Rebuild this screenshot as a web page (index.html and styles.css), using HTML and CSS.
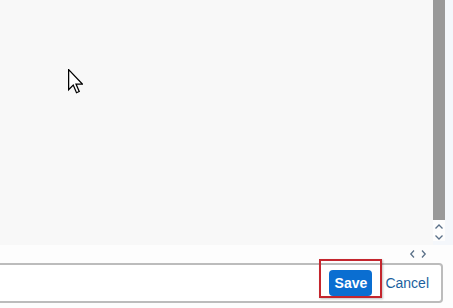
FILE: index.html
```html
<!DOCTYPE html>
<html lang="en">
<head>
  <meta charset="UTF-8" />
  <title>Editor</title>
  <link rel="stylesheet" href="styles.css">
</head>
<body>
  <div class="page">
    <!-- area de edicion con scroll vertical -->
    <div class="content">
      <div class="canvas">
        <svg class="pointer" width="15" height="25" viewBox="0 0 12 20">
          <path d="M0.5 0.5 L0.5 16.5 L4.2 12.8 L6.8 19 L9 18 L6.4 12 L11.5 12 Z" fill="#fff" stroke="#000" stroke-width="1"/>
        </svg>
      </div>
      <div class="vscroll">
        <div class="thumb"></div>
        <div class="arrows">
          <svg width="10" height="7" viewBox="0 0 10 7"><path d="M1.5 5.5 L5 2 L8.5 5.5" fill="none" stroke="#5a7088" stroke-width="1.3"/></svg>
          <svg width="10" height="7" viewBox="0 0 10 7"><path d="M1.5 1.5 L5 5 L8.5 1.5" fill="none" stroke="#5a7088" stroke-width="1.3"/></svg>
        </div>
      </div>
    </div>

    <!-- scroll horizontal -->
    <div class="hscroll">
      <svg width="7" height="10" viewBox="0 0 7 10"><path d="M5 1.5 L1.8 5 L5 8.5" fill="none" stroke="#5a7088" stroke-width="1.3"/></svg>
      <svg width="7" height="10" viewBox="0 0 7 10"><path d="M2 1.5 L5.2 5 L2 8.5" fill="none" stroke="#5a7088" stroke-width="1.3"/></svg>
    </div>

    <!-- barra de acciones -->
    <div class="footer">
      <div class="highlight">
        <button class="save">Save</button>
      </div>
      <button class="cancel">Cancel</button>
    </div>
  </div>
</body>
</html>
```

FILE: styles.css
```css
* {
  margin: 0;
  padding: 0;
  box-sizing: border-box;
}

body {
  background: #fdfdfd;
  font-family: "Liberation Sans", Arial, sans-serif;
}

.page {
  width: 453px;
  height: 308px;
  overflow: hidden;
}

/* zona gris superior */
.content {
  display: flex;
  height: 245px;
}

.canvas {
  flex: 1;
  background: #f8f8f8;
  position: relative;
}

.pointer {
  position: absolute;
  left: 68px;
  top: 69px;
}

.vscroll {
  width: 20px;
  display: flex;
  flex-direction: column;
  background: #f4f7fb;
}

.thumb {
  width: 12px;
  height: 220px;
  background: #999999;
}

.arrows {
  width: 12px;
  display: flex;
  flex-direction: column;
  align-items: center;
  gap: 4px;
  padding-top: 3px;
  background: #fdfdfd;
}

.hscroll {
  height: 17px;
  display: flex;
  justify-content: flex-end;
  align-items: center;
  gap: 4px;
  padding-right: 26px;
}

/* barra inferior con borde */
.footer {
  width: 443px;
  height: 40px;
  margin-top: 1px;
  border: 2px solid #bcbcbc;
  border-left: none;
  border-radius: 0 4px 4px 0;
  background: #fff;
  display: flex;
  justify-content: flex-end;
  align-items: center;
  padding-right: 12px;
}

.highlight {
  border: 2px solid #c4262e;
  padding: 9px 8px 0 8px;
  margin-top: -9px;
  margin-right: 3px;
  box-shadow: 1px 1px 2px rgba(0, 0, 0, 0.25);
}

.save {
  display: block;
  width: 43px;
  height: 26px;
  border: none;
  border-radius: 4px;
  background: #0a6ed1;
  color: #fff;
  font-family: "Liberation Sans", Arial, sans-serif;
  font-weight: bold;
  font-size: 14px;
}

.cancel {
  border: none;
  background: none;
  color: #1b5f9e;
  font-family: "Liberation Sans", Arial, sans-serif;
  font-size: 14px;
}
```
